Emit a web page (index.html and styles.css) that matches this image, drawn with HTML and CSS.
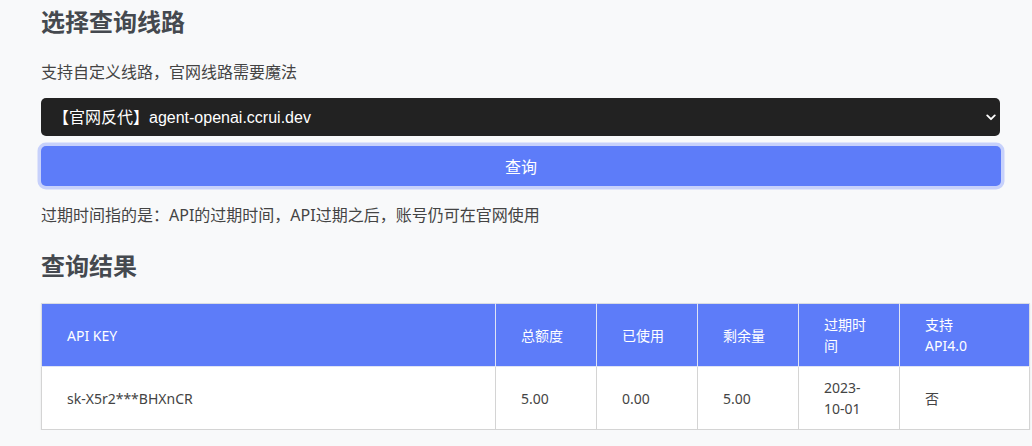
FILE: index.html
```html
<!DOCTYPE html>
<html lang="zh">
<head>
<meta charset="utf-8">
<link rel="stylesheet" href="styles.css">
</head>
<body>
<main class="page">
  <h2 class="title">选择查询线路</h2>
  <p class="hint">支持自定义线路，官网线路需要魔法</p>
  <div class="select-wrap">
    <select class="route">
      <option>【官网反代】agent-openai.ccrui.dev</option>
    </select>
    <svg class="chev" viewBox="0 0 12 8" width="10" height="7"><path d="M1.5 1.5 L6 6 L10.5 1.5" fill="none" stroke="#fff" stroke-width="2.2" stroke-linecap="round" stroke-linejoin="round"/></svg>
  </div>
  <button class="query">查询</button>
  <p class="note">过期时间指的是：API的过期时间，API过期之后，账号仍可在官网使用</p>
  <h2 class="title title-2">查询结果</h2>
  <table class="result">
    <colgroup>
      <col class="c-key"><col class="c-num"><col class="c-num"><col class="c-num"><col class="c-num"><col class="c-last">
    </colgroup>
    <thead>
      <tr><th>API KEY</th><th>总额度</th><th>已使用</th><th>剩余量</th><th>过期时间</th><th>支持<br>API4.0</th></tr>
    </thead>
    <tbody>
      <tr><td>sk-X5r2***BHXnCR</td><td>5.00</td><td>0.00</td><td>5.00</td><td>2023-10-01</td><td>否</td></tr>
    </tbody>
  </table>
</main>
</body>
</html>
```
FILE: styles.css
```css
html, body {
  margin: 0;
  padding: 0;
  background: #f8f9fa;
}
body {
  font-family: "Noto Sans", "Noto Sans CJK SC", sans-serif;
  color: #444;
  font-size: 14px;
}
.page {
  width: 960px;
  padding: 6px 0 0 41px;
}
.title {
  margin: 0;
  font-size: 24px;
  line-height: 30px;
  font-weight: 700;
  color: #45494f;
  font-family: "Noto Sans CJK SC", sans-serif;
}
.hint {
  margin: 23px 0 0;
  font-size: 16px;
  line-height: 24px;
  font-family: "Noto Sans CJK SC", sans-serif;
  color: #444;
}
.select-wrap {
  position: relative;
  margin-top: 15px;
  width: 959px;
}
.route {
  display: block;
  width: 959px;
  height: 38px;
  background: #222;
  color: #fff;
  border: none;
  border-radius: 5px;
  padding: 0 12px;
  font-family: "Liberation Sans", "Noto Sans CJK SC", sans-serif;
  font-size: 16px;
  appearance: none;
  -webkit-appearance: none;
}
.chev {
  position: absolute;
  right: 4px;
  top: 16px;
}
.query {
  display: block;
  margin-top: 10px;
  width: 960px;
  height: 40px;
  background: #5d7cf9;
  color: #fff;
  border: none;
  border-radius: 5px;
  box-shadow: 0 0 0 3.5px #c7d1fb;
  font-family: "Noto Sans CJK SC", sans-serif;
  font-size: 16px;
}
.note {
  margin: 17px 0 0;
  font-size: 16px;
  line-height: 24px;
  font-family: "Noto Sans", "Noto Sans CJK SC", sans-serif;
  color: #444;
}
.title-2 {
  margin-top: 23px;
}
.result {
  margin-top: 23px;
  width: 988px;
  table-layout: fixed;
  border-collapse: collapse;
  background: #fff;
  box-shadow: 0 1px 2px rgba(0,0,0,0.08);
  font-family: "Noto Sans", "Noto Sans CJK SC", sans-serif;
  font-size: 14px;
}
.c-key { width: 454px; }
.c-num { width: 101px; }
.c-last { width: 130px; }
.result th, .result td {
  padding: 10px 25px;
  line-height: 21px;
  text-align: left;
  font-weight: 400;
  vertical-align: middle;
}
.result th {
  background: #5d7cf9;
  color: #fff;
  border: 1px solid #dfe4f5;
  border-top-color: #d9dce3;
  height: 42px;
}
.result th:first-child { border-left-color: #d9dce3; }
.result th:last-child { border-right-color: #d9dce3; }
.result td {
  color: #444;
  border: 1px solid #d4d4d4;
  height: 42px;
}
```
